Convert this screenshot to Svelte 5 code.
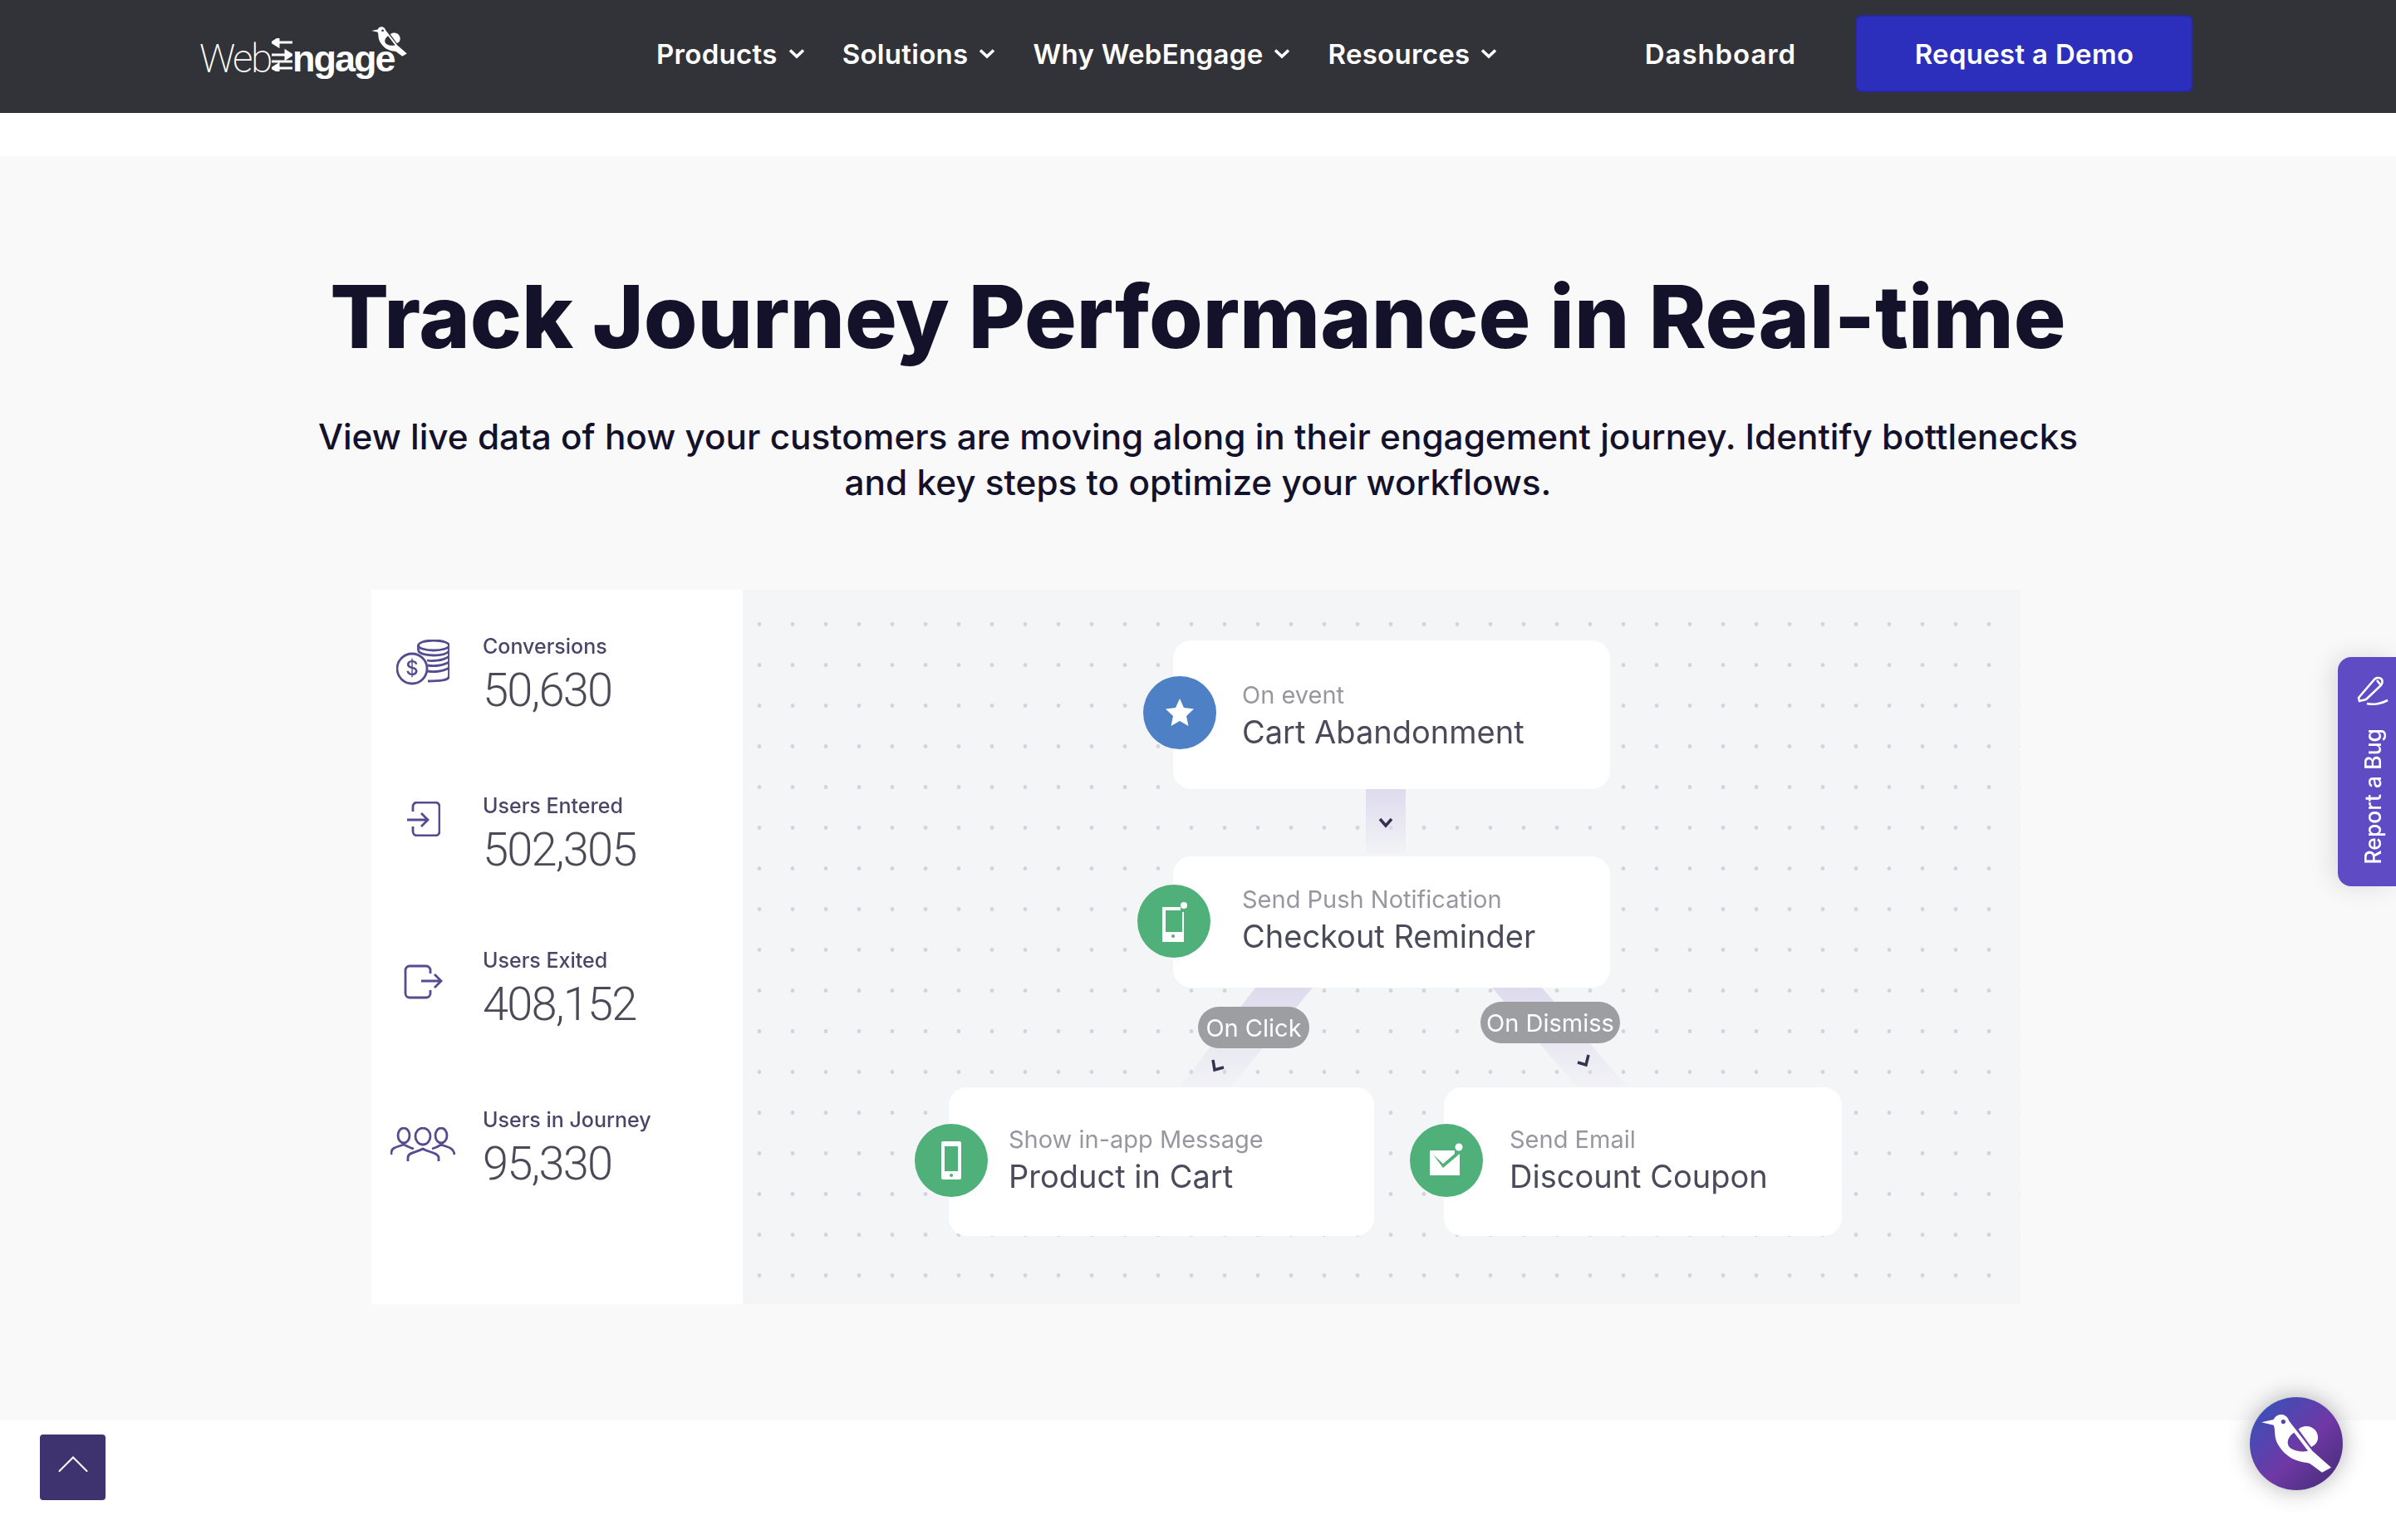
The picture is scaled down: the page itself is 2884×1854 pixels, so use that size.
<script>
  const navItems = ['Products', 'Solutions', 'Why WebEngage', 'Resources']

  const stats = [
    { icon: 'coins', label: 'Conversions', value: '50,630' },
    { icon: 'enter', label: 'Users Entered', value: '502,305' },
    { icon: 'exit', label: 'Users Exited', value: '408,152' },
    { icon: 'users', label: 'Users in Journey', value: '95,330' }
  ]

  // positions on the canvas, measured from its top left corner
  const nodes = [
    { x: 518, y: 61, w: 526, h: 179, cx: -36, cy: 43, px: 83, py: 46, color: 'blue', icon: 'star', label: 'On event', title: 'Cart Abandonment' },
    { x: 518, y: 321, w: 526, h: 158, cx: -43, cy: 34, px: 83, py: 32, color: 'green', icon: 'push', label: 'Send Push Notification', title: 'Checkout Reminder' },
    { x: 248, y: 599, w: 512, h: 179, cx: -41, cy: 44, px: 72, py: 43, color: 'green', icon: 'phone', label: 'Show in-app Message', title: 'Product in Cart' },
    { x: 844, y: 599, w: 479, h: 179, cx: -41, cy: 44, px: 79, py: 43, color: 'green', icon: 'mail', label: 'Send Email', title: 'Discount Coupon' }
  ]

  const birdBody = 'M42 91 L86 81 C92 68 104 61 117 63 C130 65 138 74 142 86 L226 194 L294 254 L261 272 L216 239 C190 234 160 232 132 207 C108 186 92 160 91 134 C90 120 90 110 86 101 Z M121 81 a8 8 0 1 0 0.1 0 Z M160 128 C142 140 132 158 140 176 C150 194 190 200 210 194 Z'
  const birdWing = 'M176 116 C190 102 218 100 235 118 C254 140 248 170 222 180 Z'
</script>

<header class="topbar">
  <a class="logo" href="#top">
    <span class="logo-web">Web</span>
    <svg class="logo-arrows" viewBox="0 0 25 40" aria-hidden="true">
      <path d="M7 5 H25 M1 5 L8 0.500 V9.500 Z M0 20 H18 M24 20 L17 15.500 V24.500 Z M0 28 H25 M7 36 H25 M1 36 L8 31.500 V40 Z" fill="#fff" stroke="#fff" stroke-width="3" />
    </svg>
    <span class="logo-ngage">ngage</span>
    <svg class="logo-bird" viewBox="30 55 270 225" aria-hidden="true">
      <path d={birdBody} fill="#fff" fill-rule="evenodd" />
      <path d={birdWing} fill="#fff" />
    </svg>
  </a>

  <nav class="nav">
    {#each navItems as item}
      <a class="nav-item" href="#top">
        {item}
        <svg class="caret" viewBox="0 0 20 13" aria-hidden="true">
          <path d="M2 2.500 L10 10 L18 2.500" fill="none" stroke="#fff" stroke-width="3.600" />
        </svg>
      </a>
    {/each}
  </nav>

  <div class="actions">
    <a class="dashboard" href="#top">Dashboard</a>
    <a class="demo" href="#top">Request a Demo</a>
  </div>
</header>

<section class="journey">
  <h1>Track Journey Performance in Real-time</h1>
  <p class="intro">
    View live data of how your customers are moving along in their engagement journey. Identify bottlenecks<br />
    and key steps to optimize your workflows.
  </p>

  <div class="board">
    <aside class="stats">
      {#each stats as stat}
        <div class="stat">
          <div class="stat-icon {stat.icon}">
            {#if stat.icon === 'coins'}
              <svg width="64" height="55" viewBox="0 0 64 55" class="line">
                <circle cx="19" cy="35" r="18" />
                <text x="19" y="43" class="dollar">$</text>
                <ellipse cx="45" cy="7" rx="18.5" ry="6" />
                <path d="M26.5 7 V13 M63.5 7 V44 C63.5 49 52 50 38 50 M26.5 13 C28 18 40 19 45 19 C54 19 62 17 63.5 13 M37 25 C42 26 56 26 63.5 20 M38 31 C44 32 56 32 63.5 27 M38 38 C44 39 56 39 63.5 34" />
              </svg>
            {:else if stat.icon === 'enter'}
              <svg width="41" height="42" viewBox="0 0 41 42" class="line">
                <path d="M8 12 V6 a5 5 0 0 1 5-5 H35 a5 5 0 0 1 5 5 V36 a5 5 0 0 1-5 5 H13 a5 5 0 0 1-5-5 V30" />
                <path d="M1 22 H26 M18 14 L26 22 L18 30" />
              </svg>
            {:else if stat.icon === 'exit'}
              <svg width="47" height="42" viewBox="0 0 47 42" class="line">
                <path d="M32 11 V7 a5 5 0 0 0-5-5 H7 a5 5 0 0 0-5 5 V35 a5 5 0 0 0 5 5 H27 a5 5 0 0 0 5-5 V31" />
                <path d="M21 20 H45 M37 12 L45 20 L37 28" />
              </svg>
            {:else}
              <svg width="78" height="42" viewBox="0 0 78 42" class="line">
                <ellipse cx="16" cy="10" rx="7" ry="9" />
                <ellipse cx="39" cy="11" rx="9" ry="10" />
                <ellipse cx="61" cy="10" rx="7" ry="9" />
                <path d="M1 33 V30 C2 24 8 24 16 21 C20 23 24 25 28 26 M50 26 C54 25 58 23 61 21 C68 24 76 24 77 33" />
                <path d="M21 41 V36 C22 30 30 31 39 26 C47 31 56 30 58 36 V41" />
              </svg>
            {/if}
          </div>
          <div class="stat-text">
            <div class="stat-label">{stat.label}</div>
            <div class="stat-value">{stat.value}</div>
          </div>
        </div>
      {/each}
    </aside>

    <div class="canvas">
      <!-- connectors sit under the nodes -->
      <svg class="links" width="1538" height="860" viewBox="0 0 1538 860">
        <defs>
          <linearGradient id="fade" x1="0" y1="0" x2="0" y2="1">
            <stop offset="0" stop-color="#dedbed" />
            <stop offset="1" stop-color="#dedbed" stop-opacity="0.1" />
          </linearGradient>
        </defs>
        <rect x="750" y="240" width="48" height="77" fill="url(#fade)" />
        <polygon points="617,479 686,479 587,599 526,599" fill="url(#fade)" />
        <polygon points="902,479 962,479 1065,599 1004,599" fill="url(#fade)" />
        <path d="M767 276 L774 284 L781 276" fill="none" stroke="#34324f" stroke-width="3.500" />
        <path d="M566 566 L568 578 L579 575" fill="none" stroke="#34324f" stroke-width="3.500" />
        <path d="M1018 560 L1015 572 L1005 569" fill="none" stroke="#34324f" stroke-width="3.500" />
      </svg>

      {#each nodes as node}
        <div class="node" style="left: {node.x}px; top: {node.y}px; width: {node.w}px; height: {node.h}px; padding: {node.py}px 0 0 {node.px}px;">
          <div class="node-badge {node.color}" style="left: {node.cx}px; top: {node.cy}px;">
            {#if node.icon === 'star'}
              <svg width="36" height="36" viewBox="0 0 36 36"><path d="M18 1 L23 12 L35 13.5 L26 22 L28.5 34 L18 28 L7.500 34 L10 22 L1 13.5 L13 12 Z" fill="#fff" /></svg>
            {:else if node.icon === 'push'}
              <svg width="36" height="50" viewBox="0 0 36 50">
                <path fill="#fff" fill-rule="evenodd" d="M4 8 H26 V12 H8 V38 H28 V14 H30 V50 H4 Z M17 41 a2 2 0 1 0 .1 0 Z" />
                <circle cx="30" cy="6" r="4" fill="#fff" />
              </svg>
            {:else if node.icon === 'phone'}
              <svg width="24" height="46" viewBox="0 0 24 46">
                <path fill="#fff" fill-rule="evenodd" d="M2 0 H22 a2 2 0 0 1 2 2 V44 a2 2 0 0 1-2 2 H2 a2 2 0 0 1-2-2 V2 a2 2 0 0 1 2-2 Z M4 6 V36 H20 V6 Z M12 39 a2 2 0 1 0 .1 0 Z" />
              </svg>
            {:else}
              <svg width="44" height="44" viewBox="0 0 44 44">
                <path fill="#fff" d="M2 10 H32 V14 L18 26 L6 15 L18 31 L38 14 V40 H2 Z" />
                <circle cx="37" cy="6" r="4.500" fill="#fff" />
              </svg>
            {/if}
          </div>
          <div class="node-label">{node.label}</div>
          <div class="node-title">{node.title}</div>
        </div>
      {/each}

      <span class="pill pill-click">On Click</span>
      <span class="pill pill-dismiss">On Dismiss</span>
    </div>
  </div>
</section>

<button class="to-top" aria-label="Back to top">
  <svg width="36" height="20" viewBox="0 0 36 20"><path d="M1.500 18 L18 1.500 L34.500 18" fill="none" stroke="#fff" stroke-width="2" stroke-linecap="round" /></svg>
</button>

<a class="report" href="#top">
  <svg class="report-icon" width="38" height="36" viewBox="0 0 38 36" aria-hidden="true">
    <path d="M2 27 L20 6 C22 3 26 2 29 4 C31 6 31 9 29 12 L11 29 L3 31 Z M24 6 L28 11" fill="none" stroke="#fff" stroke-width="2.600" />
    <path d="M12 34 C20 36 30 34 37 30" fill="none" stroke="#fff" stroke-width="2.600" />
  </svg>
  <span class="report-text">Report a Bug</span>
</a>

<button class="chat" aria-label="Open chat">
  <svg width="112" height="112" viewBox="0 0 336 336">
    <path d={birdBody} fill="#fff" fill-rule="evenodd" />
    <path d={birdWing} fill="#fff" />
  </svg>
</button>

<style>
  :global(body) {
    margin: 0;
    background: #fff;
    font-family: "Inter", "Noto Sans", sans-serif;
    overflow: hidden;
  }

  a {
    text-decoration: none;
    color: inherit;
  }

  .topbar {
    display: flex;
    align-items: center;
    box-sizing: border-box;
    height: 136px;
    padding: 0 244px 7px 240px;
    background: #323338;
    color: #fff;
    font-size: 33px;
    font-weight: 600;
    letter-spacing: 0.3px;
  }

  .logo {
    display: flex;
    align-items: flex-end;
    position: relative;
    width: 250px;
    height: 64px;
    margin-top: 4px;
  }

  .logo-web {
    font-family: "Roboto", sans-serif;
    font-size: 48px;
    font-weight: 200;
    letter-spacing: -2.500px;
    line-height: 56px;
  }

  .logo-arrows {
    flex: none;
    width: 25px;
    height: 40px;
    margin: 0 0 13px 1px;
  }

  .logo-ngage {
    font-family: "Liberation Sans", sans-serif;
    font-size: 45px;
    font-weight: 700;
    letter-spacing: -2px;
    line-height: 56px;
  }

  .logo-bird {
    position: absolute;
    left: 205px;
    top: -4px;
    width: 46px;
    height: 38px;
  }

  .nav {
    display: flex;
    gap: 45px;
    margin-left: 300px;
  }

  .nav-item {
    display: flex;
    align-items: center;
    gap: 13px;
  }

  .caret {
    width: 20px;
    height: 13px;
  }

  .actions {
    display: flex;
    align-items: center;
    gap: 71px;
    margin-left: auto;
  }

  .dashboard {
    letter-spacing: 0.900px;
  }

  .demo {
    display: flex;
    align-items: center;
    justify-content: center;
    box-sizing: border-box;
    width: 407px;
    height: 93px;
    background: #2b2fbc;
    border: 2px solid #28279f;
    border-radius: 8px;
  }

  .journey {
    box-sizing: border-box;
    height: 1522px;
    margin-top: 52px;
    padding-top: 123px;
    background: #f9f9f9;
    text-align: center;
    color: #14112b;
  }

  h1 {
    margin: 0;
    font-size: 104.700px;
    font-weight: 800;
    line-height: 140px;
  }

  .intro {
    margin: 47px 0 0;
    font-size: 42.300px;
    font-weight: 500;
    line-height: 55px;
  }

  .board {
    display: flex;
    width: 1985px;
    height: 860px;
    margin: 102px 0 0 447px;
    text-align: left;
  }

  .stats {
    display: flex;
    flex-direction: column;
    box-sizing: border-box;
    width: 447px;
    padding-top: 50px;
    background: #fff;
    filter: blur(0.6px);
  }

  .stat {
    display: flex;
    height: 192px;
  }

  .stat:nth-child(2) {
    height: 186px;
  }

  .stat-icon {
    display: flex;
    justify-content: center;
    flex: none;
    width: 124px;
    margin-right: 10px;
    box-sizing: border-box;
  }

  .coins {
    padding-top: 10px;
  }

  .enter {
    padding-top: 13px;
  }

  .exit {
    padding-top: 23px;
  }

  .users {
    padding-top: 27px;
  }

  .line {
    fill: none;
    stroke: #544c8f;
    stroke-width: 2.800;
  }

  .dollar {
    font-size: 24px;
    font-weight: 500;
    text-anchor: middle;
    fill: #544c8f;
    stroke: none;
  }

  .stat-label {
    font-size: 25px;
    font-weight: 500;
    line-height: 36px;
    color: #4a4668;
  }

  .stat-value {
    margin-top: 5px;
    font-family: "Roboto", sans-serif;
    font-size: 56px;
    font-weight: 300;
    letter-spacing: -1.800px;
    line-height: 60px;
    color: #4b4b58;
  }

  .canvas {
    position: relative;
    flex: 1;
    overflow: hidden;
    background-color: #f4f5f7;
    background-image: radial-gradient(circle, #d4d5d8 2px, transparent 2.800px);
    background-size: 40px 49px;
    background-position: 0 17px;
    filter: blur(0.7px);
  }

  .links {
    position: absolute;
    left: 0;
    top: 0;
  }

  .node {
    position: absolute;
    box-sizing: border-box;
    background: #fff;
    border-radius: 22px;
  }

  .node-badge {
    position: absolute;
    display: flex;
    align-items: center;
    justify-content: center;
    width: 88px;
    height: 88px;
    border-radius: 50%;
  }

  .blue {
    background: #4d80c4;
  }

  .green {
    background: #50b07a;
  }

  .node-label {
    font-size: 29px;
    line-height: 40px;
    color: #97979f;
  }

  .node-title {
    font-size: 38px;
    line-height: 48px;
    color: #4a4a5a;
  }

  .pill {
    position: absolute;
    display: flex;
    align-items: center;
    justify-content: center;
    height: 50px;
    border-radius: 25px;
    background: #9d9ea1;
    color: #fff;
    font-size: 29px;
  }

  .pill-click {
    left: 548px;
    top: 502px;
    width: 134px;
  }

  .pill-dismiss {
    left: 888px;
    top: 496px;
    width: 168px;
  }

  .to-top {
    position: fixed;
    left: 48px;
    top: 1727px;
    display: flex;
    align-items: center;
    justify-content: center;
    width: 79px;
    height: 79px;
    padding: 0 0 8px;
    border: none;
    border-radius: 4px;
    background: #3e336e;
  }

  .report {
    position: fixed;
    right: 0;
    top: 791px;
    box-sizing: border-box;
    display: flex;
    flex-direction: column;
    align-items: center;
    width: 70px;
    height: 276px;
    padding: 22px 0 0 14px;
    border-radius: 16px 0 0 16px;
    background: #5f4cc4;
    box-shadow: -6px 0 30px rgba(0, 0, 0, 0.12);
    color: #fff;
  }

  .report-text {
    margin-top: 28px;
    writing-mode: vertical-rl;
    transform: rotate(180deg);
    font-size: 26.500px;
    font-weight: 500;
    line-height: 30px;
  }

  .chat {
    position: fixed;
    left: 2708px;
    top: 1682px;
    width: 112px;
    height: 112px;
    padding: 0;
    border: none;
    border-radius: 50%;
    background: linear-gradient(135deg, #3c4fb8 12%, #7038a5 55%, #472f7c 92%);
    box-shadow: 0 0 28px rgba(0, 0, 0, 0.3);
  }

  .chat svg {
    display: block;
  }
</style>
